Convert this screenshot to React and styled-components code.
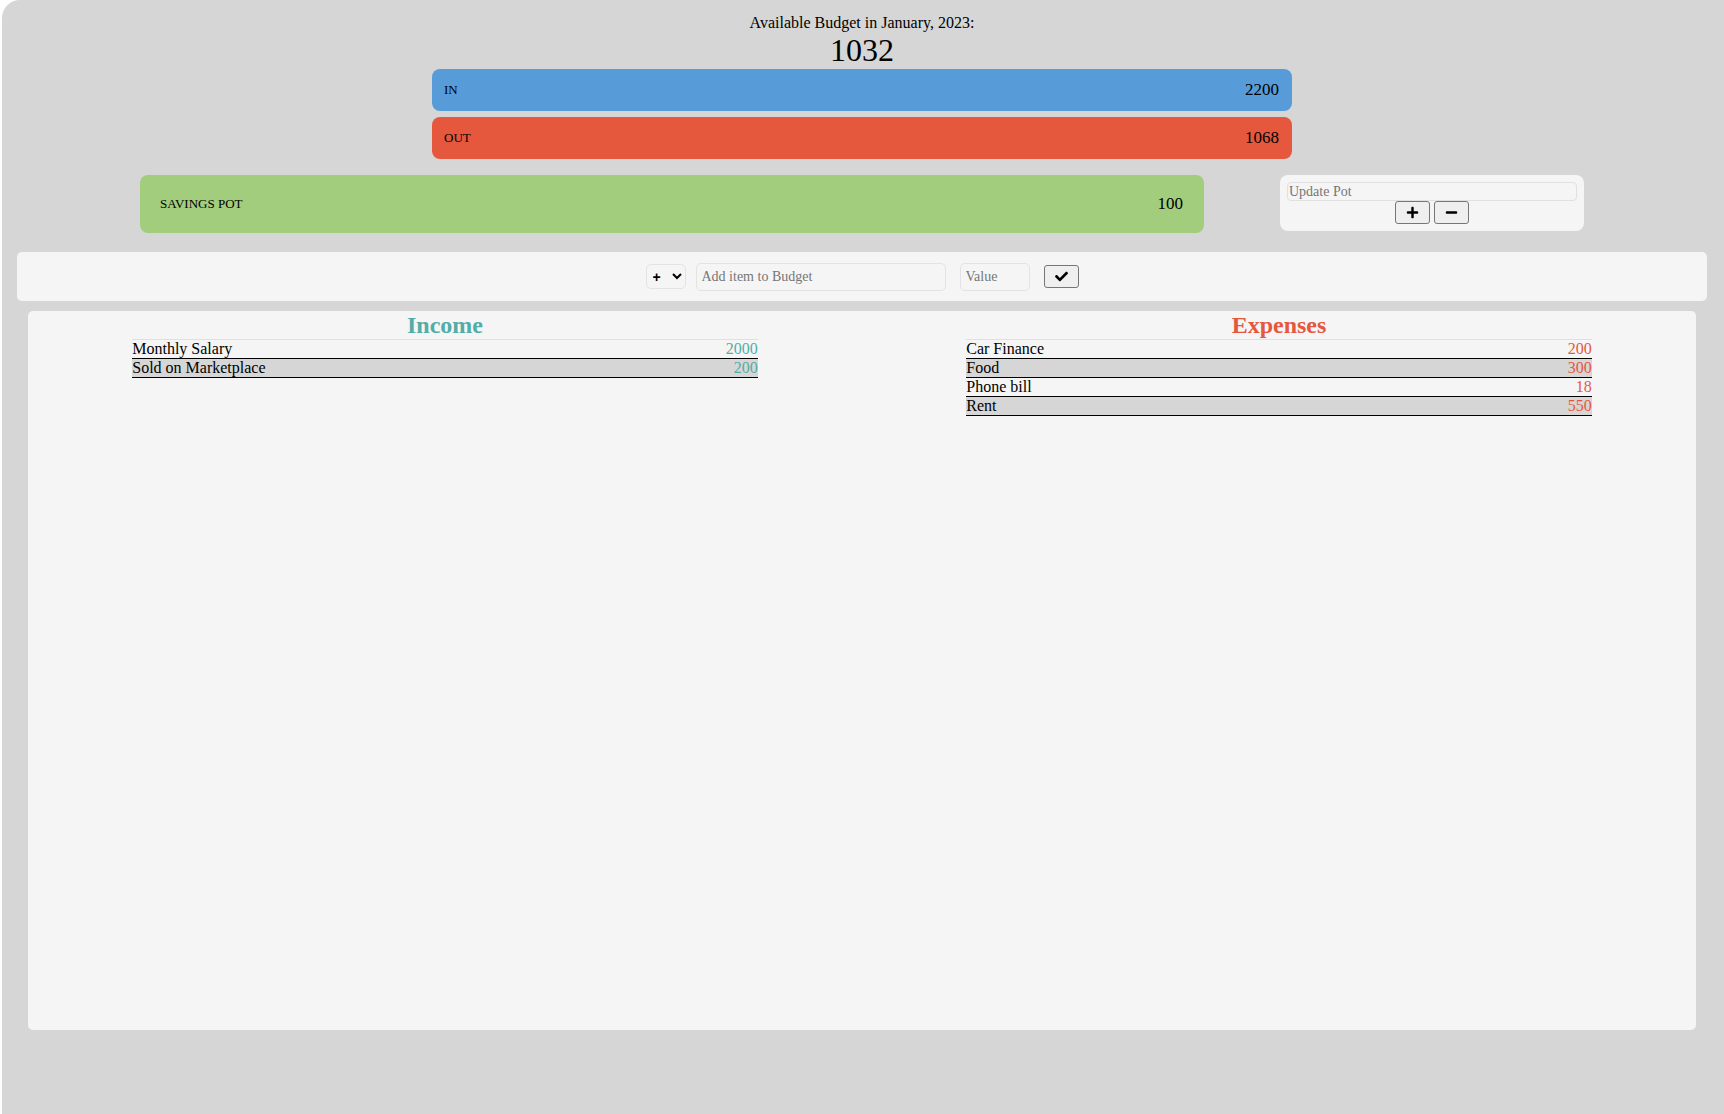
import React, { useState } from "react";
import styled, { createGlobalStyle } from "styled-components";
import { FaPlus, FaMinus, FaCheck } from "react-icons/fa";

const GlobalStyle = createGlobalStyle`
  html, body {
    margin: 0;
    padding: 0;
    background: #ffffff;
  }
  * {
    box-sizing: border-box;
  }
`;

const income = [
  { id: 1, title: "Monthly Salary", value: 2000 },
  { id: 2, title: "Sold on Marketplace", value: 200 },
];

const expenses = [
  { id: 1, title: "Car Finance", value: 200 },
  { id: 2, title: "Food", value: 300 },
  { id: 3, title: "Phone bill", value: 18 },
  { id: 4, title: "Rent", value: 550 },
];

const App = () => {
  const [type, setType] = useState("+");
  const [savings] = useState(100);

  const totalIn = income.reduce((sum, item) => sum + item.value, 0);
  const totalOut = expenses.reduce((sum, item) => sum + item.value, 0);
  const available = totalIn - totalOut - savings;

  const renderItems = (items, color) =>
    items.map((item) => (
      <Row key={item.id}>
        <span>{item.title}</span>
        <Amount $color={color}>{item.value}</Amount>
      </Row>
    ));

  return (
    <>
      <GlobalStyle />
      <Page>
        {/* Budget header */}
        <Title>Available Budget in January, 2023:</Title>
        <Total>{available}</Total>

        <Totals>
          <Bar $color="#579cd9">
            <Label>IN</Label>
            <Value>{totalIn}</Value>
          </Bar>
          <Bar $color="#e6583e">
            <Label>OUT</Label>
            <Value>{totalOut}</Value>
          </Bar>
        </Totals>

        {/* Savings pot */}
        <SavingsRow>
          <SavingsBar>
            <Label>SAVINGS POT</Label>
            <Value>{savings}</Value>
          </SavingsBar>
          <UpdateBox>
            <PotInput type="number" placeholder="Update Pot" />
            <PotButtons>
              <IconButton aria-label="Add to pot">
                <FaPlus size={13} />
              </IconButton>
              <IconButton aria-label="Take from pot">
                <FaMinus size={13} />
              </IconButton>
            </PotButtons>
          </UpdateBox>
        </SavingsRow>

        {/* Add item form */}
        <FormBar>
          <TypeSelect value={type} onChange={(e) => setType(e.target.value)}>
            <option value="+">+</option>
            <option value="-">-</option>
          </TypeSelect>
          <TextInput placeholder="Add item to Budget" $width="250px" />
          <TextInput placeholder="Value" type="number" $width="70px" />
          <IconButton aria-label="Add item">
            <FaCheck size={13} />
          </IconButton>
        </FormBar>

        {/* Income / Expenses lists */}
        <ListPanel>
          <Column>
            <Heading $color="#52ada8">Income</Heading>
            <List>{renderItems(income, "#52ada8")}</List>
          </Column>
          <Column>
            <Heading $color="#e6583e">Expenses</Heading>
            <List>{renderItems(expenses, "#e6583e")}</List>
          </Column>
        </ListPanel>
      </Page>
    </>
  );
};

export default App;

// Styled Components
const Page = styled.div`
  margin-left: 2px;
  min-height: 100vh;
  padding: 14px 2px 0 0;
  background: #d6d6d6;
  border-top-left-radius: 18px;
  font-family: "Liberation Serif", "Times New Roman", serif;
  color: #000;
  display: flex;
  flex-direction: column;
  align-items: center;
`;

const Title = styled.div`
  font-size: 16px;
  text-align: center;
`;

const Total = styled.div`
  font-size: 32px;
  text-align: center;
`;

const Totals = styled.div`
  width: 50%;
  display: flex;
  flex-direction: column;
  gap: 6px;
`;

const Bar = styled.div`
  height: 42px;
  padding: 0 13px 0 12px;
  border-radius: 8px;
  background: ${(p) => p.$color};
  display: flex;
  justify-content: space-between;
  align-items: center;
`;

const Label = styled.span`
  font-size: 13px;
`;

const Value = styled.span`
  font-size: 17px;
`;

const SavingsRow = styled.div`
  align-self: stretch;
  margin-top: 16px;
  padding: 0 138px;
  display: flex;
  align-items: flex-start;
  gap: 76px;
`;

const SavingsBar = styled.div`
  flex: 1;
  height: 58px;
  padding: 0 21px 0 20px;
  border-radius: 8px;
  background: #a2cd7c;
  display: flex;
  justify-content: space-between;
  align-items: center;
`;

const UpdateBox = styled.div`
  width: 304px;
  padding: 7px;
  border-radius: 8px;
  background: #f5f5f5;
  display: flex;
  flex-direction: column;
  align-items: center;
`;

const PotInput = styled.input`
  width: 100%;
  height: 19px;
  padding: 0 1px;
  border: 1px solid #e0e0e0;
  border-radius: 4px;
  background: #f5f5f5;
  font-family: "Liberation Serif", "Times New Roman", serif;
  font-size: 14px;
  outline: none;

  &::placeholder {
    color: #757575;
  }
`;

const PotButtons = styled.div`
  display: flex;
  gap: 4px;
`;

const IconButton = styled.button`
  width: 35px;
  height: 23px;
  padding: 0;
  border: 1px solid #767676;
  border-radius: 3px;
  background: #efefef;
  color: #000;
  display: flex;
  justify-content: center;
  align-items: center;
  cursor: pointer;
`;

const FormBar = styled.div`
  align-self: stretch;
  margin: 19px 15px 0;
  height: 49px;
  border-radius: 5px;
  background: #f5f5f5;
  display: flex;
  justify-content: center;
  align-items: center;
  gap: 14px;
`;

const TypeSelect = styled.select`
  width: 40px;
  height: 25px;
  margin-right: -4px;
  padding: 0 2px;
  border: 1px solid #e3e3e3;
  border-radius: 5px;
  background: #f5f5f5;
  font-family: "Liberation Sans", Arial, sans-serif;
  font-size: 14px;
  font-weight: bold;
  color: #000;
`;

const TextInput = styled.input`
  width: ${(p) => p.$width};
  height: 28px;
  padding: 0 5px;
  border: 1px solid #e3e3e3;
  border-radius: 5px;
  background: #f5f5f5;
  font-family: "Liberation Serif", "Times New Roman", serif;
  font-size: 14px;
  outline: none;

  &::placeholder {
    color: #757575;
  }
`;

const ListPanel = styled.div`
  align-self: stretch;
  margin: 10px 26px 0;
  height: 719px;
  border-radius: 5px;
  background: #f5f5f5;
  display: grid;
  grid-template-columns: 1fr 1fr;
  align-items: start;
`;

const Column = styled.div`
  padding-top: 1px;
  display: flex;
  flex-direction: column;
  align-items: center;
`;

const Heading = styled.h2`
  margin: 0;
  font-size: 24px;
  font-weight: bold;
  color: ${(p) => p.$color};
`;

const List = styled.ul`
  width: 75%;
  margin: 0;
  padding: 0;
  list-style: none;
  border-top: 1px solid #e0e0e0;
`;

const Row = styled.li`
  display: flex;
  justify-content: space-between;
  font-size: 16px;
  border-bottom: 1px solid #000;

  &:nth-child(even) {
    background: #d6d6d6;
  }
`;

const Amount = styled.span`
  color: ${(p) => p.$color};
`;
